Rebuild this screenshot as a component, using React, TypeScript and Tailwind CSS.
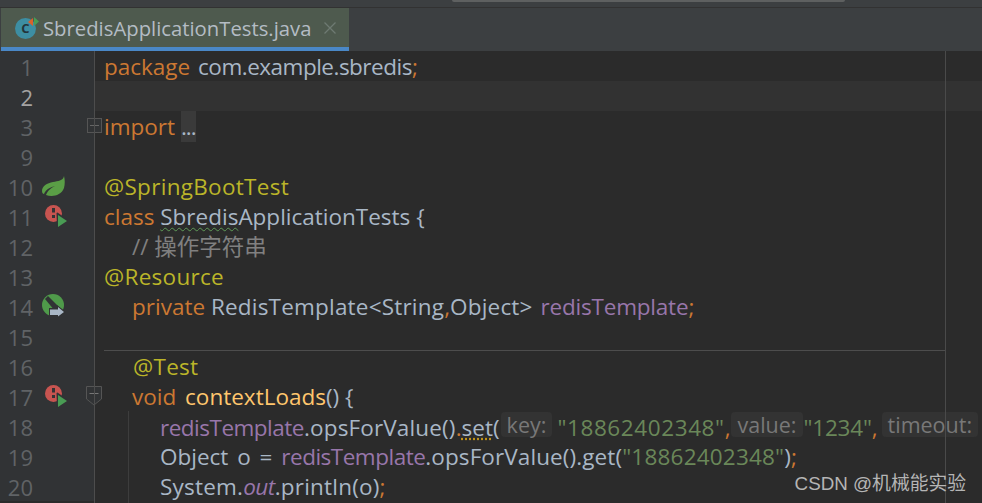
import React from "react";

const K = ({ children }: { children: React.ReactNode }) => <span className="text-[#cc7832]">{children}</span>;
const A = ({ children }: { children: React.ReactNode }) => <span className="tracking-[0.3px] text-[#bbb529]">{children}</span>;
const V = ({ children }: { children: React.ReactNode }) => <span className="tracking-[-0.5px] text-[#9876aa]">{children}</span>;
const Hint = ({ children }: { children: React.ReactNode }) => (
  <span className="mx-[1px] inline-block h-[25px] rounded-[4px] bg-[#333333] px-[6px] align-[3px] text-[21.500px] leading-[25px] text-[#787878]">{children}</span>
);

const ErrorRun = () => (
  <svg width="24" height="24" viewBox="0 0 24 24" className="ml-[3px] block">
    <circle cx="8.500" cy="9.500" r="8.500" fill="#c75450" />
    <rect x="7" y="4" width="3" height="4.500" fill="#313335" />
    <rect x="7" y="11" width="3" height="3" fill="#313335" />
    <path d="M11.500 9L12.500 8.500L23 16L12 24Z" fill="#313335" />
    <path d="M13 11L22 17L13 23Z" fill="#499c54" />
  </svg>
);

const Leaf = () => (
  <svg width="24" height="22" viewBox="0 0 24 22" className="block">
    <path d="M22 1C21 6 16 6 11 7C5 8 0 11 0 16C0 18 1 19 2 19C4 14 9 12 13 11C9 13 6 15 4 20C10 22 19 21 22 13C23 9 23 5 22 1Z" fill="#5a9e46" />
  </svg>
);

const BeanGo = () => (
  <svg width="24" height="24" viewBox="0 0 24 24" className="block">
    <circle cx="11" cy="11" r="11" fill="#4f9a4a" />
    <path d="M3 5L6 2L18 14L13 17Z" fill="#313335" />
    <path d="M7 22V14H15V11L24 18L15 24V22Z" fill="#313335" />
    <path d="M8 21V15.500H16V13L22 18L16 22.500V21Z" fill="#a9b7c6" />
  </svg>
);

const FileIcon = () => (
  <div className="relative h-[22px] w-[24px] shrink-0">
    <div className="absolute left-0 top-[1px] flex h-[21px] w-[21px] items-center justify-center rounded-full bg-[#3d8ea3] text-[13px] font-bold leading-none text-[#23343a]">C</div>
    <svg width="24" height="22" viewBox="0 0 24 22" className="absolute left-0 top-0">
      <path d="M13 5L18 1V9Z" fill="#d9622b" />
      <path d="M19 0L24 4.500L19 9Z" fill="#499c54" />
    </svg>
  </div>
);

const rows: { n: number; icon?: React.ReactNode; fold?: "plus" | "minus"; pad?: number; code?: React.ReactNode; current?: boolean }[] = [
  { n: 1, code: <><K>package</K> <span className="ml-[2px] tracking-[-0.5px]">com.example.sbredis</span><K>;</K></> },
  { n: 2, current: true },
  { n: 3, fold: "plus", code: <><K>import</K> <span className="bg-[#3a3a3a] tracking-[-1px] text-[#a9b7c6]">...</span></> },
  { n: 9 },
  { n: 10, icon: <Leaf />, code: <A>@SpringBootTest</A> },
  { n: 11, icon: <ErrorRun />, code: <><K>class</K> <span className="underline decoration-wavy decoration-[#5e9a57] decoration-1 [text-underline-offset:2px]">Sbredis</span>ApplicationTests {"{"}</> },
  { n: 12, pad: 28, code: <span className="text-[#808080]">// 操作字符串</span> },
  { n: 13, code: <A>@Resource</A> },
  { n: 14, icon: <BeanGo />, pad: 28, code: <><K>private</K> <span className="tracking-[0.2px]">RedisTemplate&lt;String</span><K>,</K><span className="tracking-[0.2px]">Object&gt;</span> <span className="ml-[2px] tracking-[-0.2px] text-[#9876aa]">redisTemplate</span><K>;</K></> },
  { n: 15 },
  { n: 16, pad: 29, code: <A>@Test</A> },
  { n: 17, icon: <ErrorRun />, fold: "minus", pad: 28, code: <><K>void</K> <span className="ml-[3px] text-[#ffc66d]">contextLoads</span>() {"{"}</> },
  { n: 18, pad: 56, code: <><V>redisTemplate</V><span className="tracking-[0.15px]">.opsForValue()</span><K>.</K><span className="underline decoration-dotted decoration-[#be9117]">set</span>(<Hint>key:</Hint><span className="ml-[4px] tracking-[0.6px] text-[#6a8759]">"18862402348"</span><K>,</K><Hint>value:</Hint><span className="tracking-[-0.2px] text-[#6a8759]">"1234"</span><K>,</K><span className="ml-[3px]"><Hint>timeout:</Hint></span></> },
  { n: 19, pad: 56, code: <><span className="[word-spacing:3px]">Object o = </span><V>redisTemplate</V><span className="tracking-[0.1px]">.opsForValue().get(</span><span className="tracking-[0.2px] text-[#6a8759]">"18862402348"</span>)<K>;</K></> },
  { n: 20, pad: 56, code: <><span className="tracking-[0.2px]">System.</span><V><i>out</i></V><span className="tracking-[0.2px]">.println(o)</span><K>;</K></> },
];

export default function App() {
  return (
    <div className="relative flex h-[503px] w-[982px] flex-col overflow-hidden bg-[#2b2b2b] text-[#a9b7c6] [font-family:'Open_Sans','Noto_Sans_CJK_SC',sans-serif]">
      <div className="h-[8px] shrink-0 border-b border-[#323232] bg-[#3c3f41]">
        <div className="ml-[452px] h-[2px] w-[393px] rounded-b-[3px] bg-[#5e6060]" />
      </div>
      <div className="flex h-[43px] shrink-0 bg-[#3c3f41]">
        <div className="ml-[1px] flex h-[43px] w-[348px] items-center gap-[4px] border-b-[4px] border-[#4a88c7] bg-[#4e5a4e] pl-[14px]">
          <FileIcon />
          <span className="pt-[1px] text-[20.300px] leading-[30px] text-[#b4bcc4]">SbredisApplicationTests.java</span>
          <svg width="14" height="14" viewBox="0 0 14 14" className="ml-[7px]">
            <path d="M1.500 1.500L12.500 12.500M12.500 1.500L1.500 12.500" stroke="#6e7a72" strokeWidth="1.300" fill="none" />
          </svg>
        </div>
      </div>
      <div className="relative flex-1">
        {rows.map((r) => (
          <div key={r.n} className={`flex h-[30px] ${r.current ? "bg-[#323232]" : ""}`}>
            <div className={`relative flex w-[94px] shrink-0 items-center bg-[#313335] ${r.current ? "text-[#a4a3a3]" : "text-[#606366]"}`}>
              <span className="w-[33px] pt-[2px] text-right text-[22px] leading-[30px]">{r.n}</span>
              <span className="ml-[9px]">{r.icon}</span>
              {r.fold === "plus" && (
                <svg width="15" height="15" viewBox="0 0 15 15" className="absolute left-[87px] top-[7px]">
                  <rect x="0.500" y="0.500" width="14" height="14" fill="#313335" stroke="#555" />
                  <path d="M3 7.500H12M7.500 3V12" stroke="#666" />
                </svg>
              )}
              {r.fold === "minus" && (
                <svg width="16" height="20" viewBox="0 0 16 20" className="absolute left-[86px] top-[5px]">
                  <path d="M0.500 0.500H15.500V13L8 19L0.500 13Z" fill="#313335" stroke="#555" />
                  <path d="M3.500 7.500H12.500" stroke="#777" />
                </svg>
              )}
            </div>
            <div
              className="flex-1 whitespace-pre pt-[1px] text-[22.500px] leading-[30px]"
              style={{ paddingLeft: 10 + (r.pad ?? 0) }}
            >
              {r.code}
            </div>
          </div>
        ))}
        <div className="absolute bottom-0 left-[94px] top-0 w-px bg-[#4d4d4d]" />
        <div className="absolute bottom-0 left-[945px] top-0 w-px bg-[#4a4a4a]" />
        <div className="absolute left-[104px] top-[299px] h-px w-[841px] bg-[#4d4d4d]" />
        <div className="absolute bottom-0 left-[128px] top-[360px] w-px bg-[#3d3d3d]" />
        <div className="absolute right-[16px] top-[420px] text-[18.800px] leading-[26px] text-[#b5b5b5] [font-family:'Liberation_Sans','Noto_Sans_CJK_SC',sans-serif]">CSDN @机械能实验</div>
      </div>
    </div>
  );
}
